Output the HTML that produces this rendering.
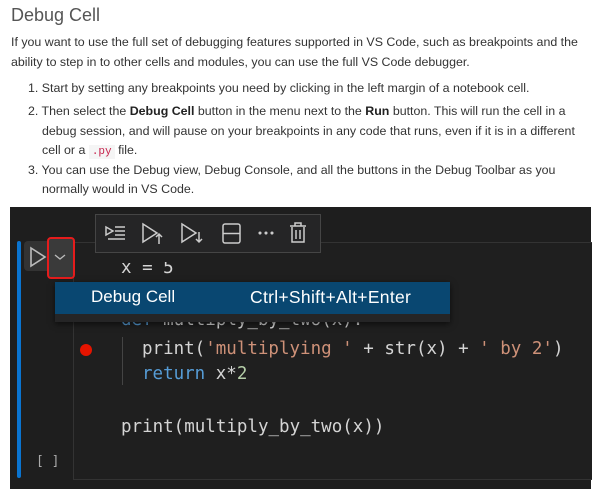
<!DOCTYPE html>
<html><head><meta charset="utf-8"><style>
body{margin:0;width:600px;height:504px;background:#fff;position:relative;overflow:hidden;font-family:"Liberation Sans",sans-serif;color:#333}
.t{position:absolute;left:11px;top:5px;font-size:18px;color:#555;font-weight:300}
.p{position:absolute;left:11px;font-size:12.4px;white-space:nowrap;color:#333}
b{color:#222}
code{font-family:"Liberation Mono",monospace;font-size:11px;color:#c7254e;background:#f5f5f5;padding:1px 3px}
.dark{position:absolute;left:10px;top:207px;width:581px;height:282px;background:#1e1e1e}
.abs{position:absolute}
.code{position:absolute;font-family:"DejaVu Sans Mono",monospace;font-size:17.5px;color:#d4d4d4;white-space:pre}
</style></head><body>
<div class="t">Debug Cell</div>
<div class="p" style="top:35px">If you want to use the full set of debugging features supported in VS Code, such as breakpoints and the</div>
<div class="p" style="top:55px">ability to step in to other cells and modules, you can use the full VS Code debugger.</div>
<div class="p" style="top:81px;left:28px">1. Start by setting any breakpoints you need by clicking in the left margin of a notebook cell.</div>
<div class="p" style="top:104px;left:28px">2. Then select the <b>Debug Cell</b> button in the menu next to the <b>Run</b> button. This will run the cell in a</div>
<div class="p" style="top:124px;left:42px">debug session, and will pause on your breakpoints in any code that runs, even if it is in a different</div>
<div class="p" style="top:143px;left:42px">cell or a <code>.py</code> file.</div>
<div class="p" style="top:163px;left:28px">3. You can use the Debug view, Debug Console, and all the buttons in the Debug Toolbar as you</div>
<div class="p" style="top:182px;left:42px">normally would in VS Code.</div>

<div class="dark"></div>
<div class="abs" style="left:73px;top:242px;width:518px;height:236px;border-top:1px solid #333;border-left:1px solid #333;border-bottom:1px solid #333;background:#1f1f1f"></div>
<div class="abs" style="left:17px;top:241px;width:4px;height:237px;background:#0a74d0;border-radius:2px"></div>
<div class="abs" style="left:24px;top:241px;width:48px;height:30px;background:#333;border-radius:4px"></div>
<svg class="abs" style="left:28px;top:246px" width="20" height="22"><path d="M3 2 L17 11 L3 20 Z" fill="none" stroke="#bbb" stroke-width="1.6"/></svg>
<div class="abs" style="left:47px;top:237px;width:24px;height:38px;border:2px solid #e51c1c;border-radius:4px;background:#3a3a3a"></div>
<svg class="abs" style="left:53px;top:252px" width="14" height="10"><path d="M2 3 L7 7 L12 3" fill="none" stroke="#bbb" stroke-width="1.3"/></svg>

<div class="abs" style="left:95px;top:214px;width:224px;height:37px;background:#252526;border:1px solid #454545"></div>
<svg class="abs" style="left:95px;top:214px" width="226" height="38" fill="none" stroke="#ccc" stroke-width="1.5">
<path d="M11 13 L18 17 L11 21 Z M20 13 H30 M20 17 H30 M20 21 H30 M13 25 H30"/>
<path d="M48 10 L62 19 L48 28 Z M64 30 V20 M61 23 L64 20 L67 23"/>
<path d="M87 10 L101 19 L87 28 Z M104 18 V28 M101 25 L104 28 L107 25"/>
<rect x="128" y="10" width="17" height="19" rx="2"/><path d="M128 19.5 H145"/>
<circle cx="165" cy="19" r="0.8" fill="#ccc"/><circle cx="171" cy="19" r="0.8" fill="#ccc"/><circle cx="177" cy="19" r="0.8" fill="#ccc"/>
<path d="M195 12 H211 M200 12 V9 H206 V12 M197 13 V28 H209 V13 M201 16 V25 M205 16 V25"/>
</svg>

<div class="abs" style="left:110px;top:262px;width:100px;height:14px;overflow:hidden"><div class="code" style="left:11px;top:-4px">x = 5</div></div>
<div class="code" style="left:121px;top:310px"><span style="color:#569cd6">def</span> multiply_by_two(x):</div>
<div class="abs" style="left:55px;top:282px;width:395px;height:40px;background:#252526;box-shadow:0 2px 6px rgba(0,0,0,.6)"></div>
<div class="abs" style="left:55px;top:282px;width:395px;height:32px;background:#094771"></div>
<div class="abs" style="left:91px;top:287px;font-size:17px;color:#fff;font-family:'Liberation Sans',sans-serif">Debug Cell</div>
<div class="abs" style="left:250px;top:287px;font-size:17.5px;letter-spacing:0.3px;color:#fff;font-family:'Liberation Sans',sans-serif">Ctrl+Shift+Alt+Enter</div>
<div class="abs" style="left:80px;top:344px;width:12px;height:12px;border-radius:50%;background:#e51400"></div>
<div class="abs" style="left:122px;top:337px;width:1px;height:48px;background:#444"></div>
<div class="code" style="left:142px;top:339px">print(<span style="color:#ce9178">'multiplying '</span> + str(x) + <span style="color:#ce9178">' by 2'</span>)</div>
<div class="code" style="left:142px;top:364px"><span style="color:#569cd6">return</span> x*<span style="color:#b5cea8">2</span></div>
<div class="code" style="left:121px;top:417px">print(multiply_by_two(x))</div>
<div class="code" style="left:36px;top:454px;font-size:13px;color:#aaa">[ ]</div>
</body></html>
